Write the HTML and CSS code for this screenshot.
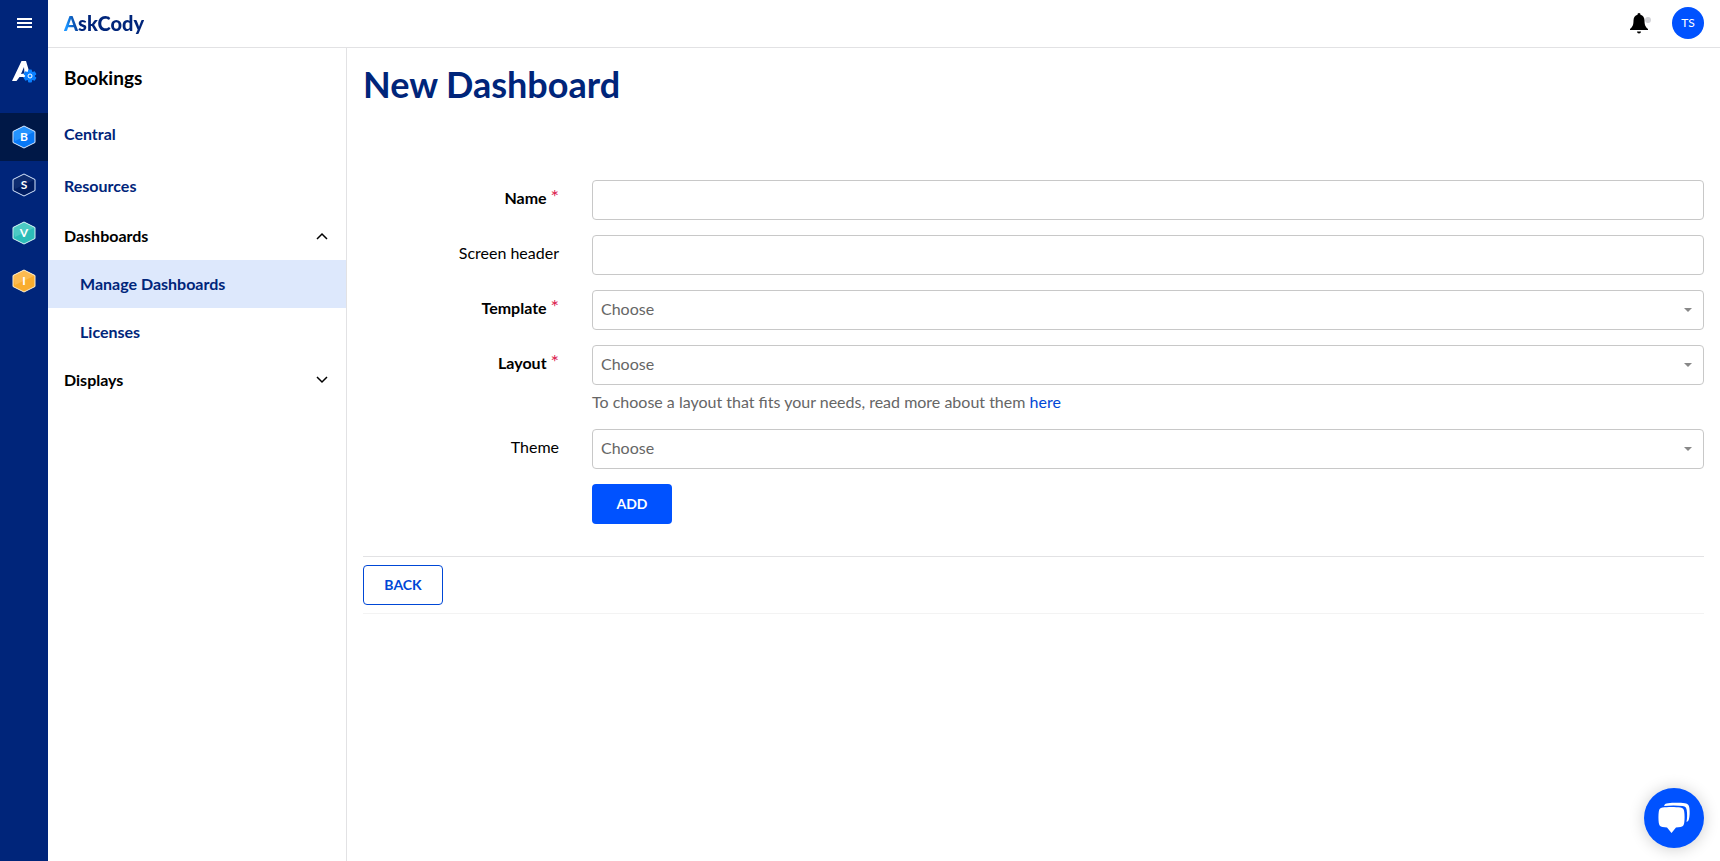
FILE: index.html
```html
<!DOCTYPE html>
<html lang="en">
<head>
    <meta charset="UTF-8">
    <meta name="viewport" content="width=device-width, initial-scale=1.0">
    <title>New Dashboard - AskCody</title>
    <link rel="stylesheet" href="styles.css">
</head>
<body>

    <nav class="rail" aria-label="Modules">
        <button class="menu-btn" type="button" aria-label="Menu">
            <svg width="16" height="12" viewBox="0 0 16 12"><path d="M1 2h15M1 6h15M1 10h15" stroke="#fff" stroke-width="2"/></svg>
        </button>
        <a class="rail-logo" href="#" aria-label="Admin">
            <svg width="26" height="24" viewBox="0 0 26 24">
                <path d="M1 21 10.500 1H15l4.500 15-6 3-1-2H8.500L5.500 21zM13 7l-3 7 3.500-.5z" fill="#fff" fill-rule="evenodd"/>
                <g fill="#0a80ff">
                    <circle cx="19" cy="16" r="5"/>
                    <rect x="17" y="9.500" width="4" height="13" rx="1"/>
                    <rect x="17" y="9.500" width="4" height="13" rx="1" transform="rotate(60 19 16)"/>
                    <rect x="17" y="9.500" width="4" height="13" rx="1" transform="rotate(120 19 16)"/>
                </g>
                <circle cx="19" cy="16" r="2" fill="none" stroke="#fff" stroke-width="1"/>
            </svg>
        </a>
        <a class="rail-item active" href="#" aria-label="Bookings">
            <svg width="26" height="24" viewBox="0 0 26 24">
                <path d="M13 1 24 6.500v11L13 23 2 17.500v-11z" fill="#0878f5"/>
                <path d="M13 1 24 6.500 4 16 2 6.500z" fill="#2493ff"/>
                <path d="M13 1 24 6.500v11L13 23 2 17.500v-11z" fill="none" stroke="#d8e8ff"/>
                <text x="13" y="16">B</text>
            </svg>
        </a>
        <a class="rail-item" href="#" aria-label="Services">
            <svg width="26" height="24" viewBox="0 0 26 24">
                <path d="M13 1 24 6.500v11L13 23 2 17.500v-11z" fill="#001c60"/>
                <path d="M13 1 24 6.500 4 16 2 6.500z" fill="#0e2c70"/>
                <path d="M13 1 24 6.500v11L13 23 2 17.500v-11z" fill="none" stroke="#d8e8ff"/>
                <text x="13" y="16">S</text>
            </svg>
        </a>
        <a class="rail-item" href="#" aria-label="Visitors">
            <svg width="26" height="24" viewBox="0 0 26 24">
                <path d="M13 1 24 6.500v11L13 23 2 17.500v-11z" fill="#2cbcb8"/>
                <path d="M13 1 24 6.500 4 16 2 6.500z" fill="#4ccac4"/>
                <path d="M13 1 24 6.500v11L13 23 2 17.500v-11z" fill="none" stroke="#d8f5f5"/>
                <text x="13" y="16">V</text>
            </svg>
        </a>
        <a class="rail-item" href="#" aria-label="Insights">
            <svg width="26" height="24" viewBox="0 0 26 24">
                <path d="M13 1 24 6.500v11L13 23 2 17.500v-11z" fill="#f9ad2e"/>
                <path d="M13 1 24 6.500 4 16 2 6.500z" fill="#fcbb50"/>
                <path d="M13 1 24 6.500v11L13 23 2 17.500v-11z" fill="none" stroke="#fff0d0"/>
                <text x="13" y="16">I</text>
            </svg>
        </a>
    </nav>

    <div class="app">
        <header class="topbar">
            <a class="brand" href="#">AskCody</a>
            <div class="top-actions">
                <button class="bell" type="button" aria-label="Notifications">
                    <svg width="22" height="22" viewBox="0 0 22 22">
                        <circle cx="18" cy="8" r="3" fill="#d4d4d8"/>
                        <path d="M9 1a1.500 1.500 0 0 1 1.500 1.700C13 3.500 14.500 5.500 14.500 8.500c0 4.500 1 6.500 3.500 8.500v1H0v-1c2.500-2 3.500-4 3.500-8.500 0-3 1.500-5 4-5.800A1.500 1.500 0 0 1 9 1z" fill="#000"/>
                        <path d="M7 19.500h4a2 2 0 0 1-4 0z" fill="#000"/>
                    </svg>
                </button>
                <button class="avatar" type="button">TS</button>
            </div>
        </header>

        <div class="body">
            <aside class="sidebar">
                <h2>Bookings</h2>
                <a class="side-link" href="#">Central</a>
                <a class="side-link" href="#">Resources</a>
                <button class="side-group" type="button" aria-expanded="true">
                    Dashboards
                    <svg width="12" height="8" viewBox="0 0 12 8"><path d="m1 7 5-5 5 5" fill="none" stroke="#000" stroke-width="1.500"/></svg>
                </button>
                <a class="side-sub active" href="#">Manage Dashboards</a>
                <a class="side-sub" href="#">Licenses</a>
                <button class="side-group" type="button" aria-expanded="false">
                    Displays
                    <svg width="12" height="8" viewBox="0 0 12 8"><path d="m1 1 5 5 5-5" fill="none" stroke="#000" stroke-width="1.500"/></svg>
                </button>
            </aside>

            <main class="content">
                <h1>New Dashboard</h1>
                <form class="panel">
                    <div class="fields">
                        <label class="required" for="name">Name <span>*</span></label>
                        <input class="control" type="text" id="name">

                        <label for="header">Screen header</label>
                        <input class="control" type="text" id="header">

                        <label class="required" for="template">Template <span>*</span></label>
                        <div class="select-wrap">
                            <select class="control" id="template"><option>Choose</option></select>
                        </div>

                        <label class="required" for="layout">Layout <span>*</span></label>
                        <div>
                            <div class="select-wrap">
                                <select class="control" id="layout"><option>Choose</option></select>
                            </div>
                            <p class="hint">To choose a layout that fits your needs, read more about them <a href="#">here</a></p>
                        </div>

                        <label for="theme">Theme</label>
                        <div class="select-wrap">
                            <select class="control" id="theme"><option>Choose</option></select>
                        </div>

                        <button class="btn btn-primary" type="button">ADD</button>
                    </div>
                    <div class="panel-footer">
                        <button class="btn btn-outline" type="button">BACK</button>
                    </div>
                </form>
            </main>
        </div>
    </div>

    <button class="chat" type="button" aria-label="Chat">
        <svg width="34" height="32" viewBox="0 0 34 32">
            <path d="M7 4C8 1.500 9 1.500 11 1.300 16 .7 23 .7 28 1.300c3 .4 4 1.700 4.400 4.700.5 4 .3 8-.4 11-.4 1.700-1.200 2.500-2.500 3 .8-4 .8-8 .2-12-.4-2.500-1.200-3.600-4-4C20 3.300 13 3.300 7 4z" fill="#fff"/>
            <path d="M5.500 5.600c5-.8 13-.8 18 0 2.500.4 3.300 1.400 3.700 4 .5 3.500.5 8 0 11.500-.4 2.500-1.200 3.500-3.700 4-1.500.3-3 .4-4.500.5L14.500 31 10 25.600c-1.500-.1-3-.2-4.500-.5-2.500-.5-3.300-1.500-3.700-4-.5-3.500-.5-8 0-11.500.4-2.600 1.200-3.600 3.700-4z" fill="#fff"/>
        </svg>
    </button>

</body>
</html>
```
FILE: styles.css
```css
* {
    box-sizing: border-box;
}
body {
    margin: 0;
    display: flex;
    min-height: 100vh;
    font-family: Lato, sans-serif;
    font-size: 16px;
    line-height: 24px;
    color: #000;
    background-color: #fff;
}
button,
input,
select {
    font: inherit;
    margin: 0;
}
button {
    border: none;
    background: none;
    padding: 0;
    cursor: pointer;
}
a {
    text-decoration: none;
}

/* module rail */
.rail {
    width: 48px;
    flex-shrink: 0;
    background-color: #00257a;
}
.menu-btn,
.rail-logo,
.rail-item {
    display: flex;
    align-items: center;
    justify-content: center;
    width: 100%;
    height: 48px;
}
.menu-btn {
    padding-bottom: 2px;
}
.rail-logo {
    margin-bottom: 17px;
}
.rail-item.active {
    background-color: #001847;
}
.rail-item text {
    fill: #fff;
    font-size: 12px;
    font-weight: 700;
    text-anchor: middle;
}

/* top bar */
.app {
    flex: 1;
    display: flex;
    flex-direction: column;
    min-width: 0;
}
.topbar {
    display: flex;
    align-items: center;
    justify-content: space-between;
    height: 48px;
    padding: 0 16px 2px;
    border-bottom: 1px solid #e2e2e4;
}
.brand {
    font-size: 20px;
    font-weight: 900;
    color: transparent;
    background: linear-gradient(80deg, #1a94ff 4px, #00257a 18px);
    background-clip: text;
}
.top-actions {
    display: flex;
    align-items: center;
    gap: 20px;
}
.bell,
.chat {
    display: flex;
    align-items: center;
    justify-content: center;
}
.avatar {
    width: 32px;
    height: 32px;
    border-radius: 50%;
    background-color: #0052ff;
    color: #fff;
    font-size: 12px;
}

/* sidebar */
.body {
    flex: 1;
    display: flex;
}
.sidebar {
    width: 299px;
    flex-shrink: 0;
    border-right: 1px solid #e2e2e4;
}
.sidebar h2 {
    margin: 0;
    padding: 18px 16px;
    font-size: 19px;
    font-weight: 700;
    line-height: 24px;
}
.side-link,
.side-sub,
.side-group {
    display: flex;
    align-items: center;
    justify-content: space-between;
    width: 100%;
    height: 48px;
    padding: 0 18px 0 16px;
    font-weight: 700;
    color: #00257a;
}
.side-link {
    height: 52px;
}
.side-group {
    color: #000;
}
.side-sub {
    padding-left: 32px;
}
.side-sub.active {
    background-color: #dde8fc;
}

/* form */
.content {
    flex: 1;
    min-width: 0;
    padding: 12px 16px;
}
h1 {
    margin: 0 0 24px;
    font-size: 36px;
    line-height: 48px;
    font-weight: 700;
    color: #00257a;
}
.panel {
    border-bottom: 1px solid #f3f3f3;
}
.fields {
    display: grid;
    grid-template-columns: 196px 1fr;
    gap: 15px 33px;
    padding: 48px 0 32px;
    border-bottom: 1px solid #e2e2e4;
}
.fields label {
    padding-top: 6px;
    text-align: right;
}
.fields .required {
    font-weight: 700;
}
.required span {
    color: #dc1e50;
    font-size: 20px;
    line-height: 20px;
    font-weight: 400;
}
.control {
    display: block;
    width: 100%;
    height: 40px;
    padding: 0 8px 2px;
    border: 1px solid #c8c8c8;
    border-radius: 4px;
    background-color: #fff;
    color: #666;
}
select.control {
    appearance: none;
}
.select-wrap {
    position: relative;
}
.select-wrap::after {
    content: "";
    position: absolute;
    top: 18px;
    right: 12px;
    border: 4px solid transparent;
    border-top-color: #888;
    border-bottom: none;
    pointer-events: none;
}
.hint {
    margin: 5px 0 0;
    color: #666;
}
.hint a {
    color: #0047d6;
}
.btn {
    width: 80px;
    height: 40px;
    border-radius: 4px;
    font-size: 14px;
    font-weight: 700;
}
.btn-primary {
    grid-column: 2;
    background-color: #0052ff;
    color: #fff;
}
.btn-outline {
    border: 1px solid #0047d6;
    color: #0047d6;
}
.panel-footer {
    padding: 8px 0;
}

/* chat launcher */
.chat {
    position: fixed;
    right: 16px;
    bottom: 13px;
    width: 60px;
    height: 60px;
    border-radius: 50%;
    background-color: #0052ff;
    box-shadow: 0 1px 16px rgba(0, 0, 0, 0.2);
}
```
